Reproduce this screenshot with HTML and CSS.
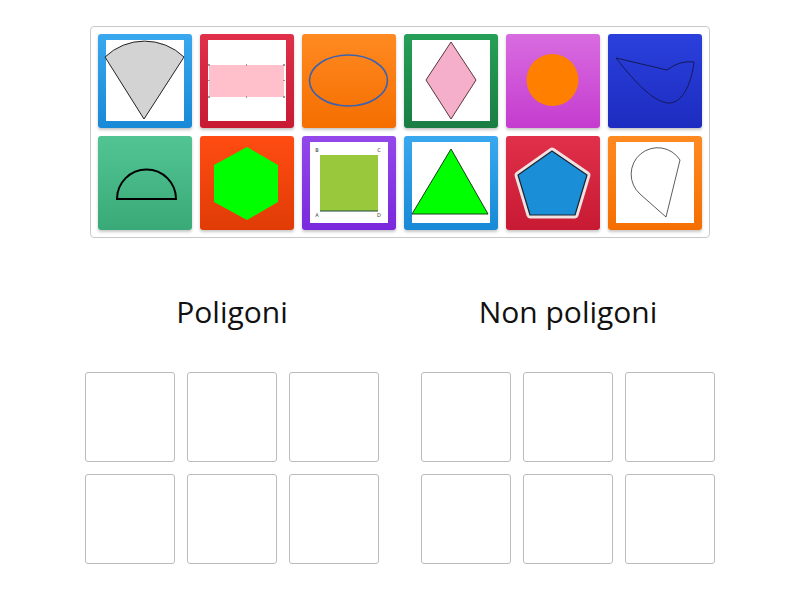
FILE: index.html
```html
<!DOCTYPE html>
<html lang="it">
<head>
    <meta charset="UTF-8">
    <meta name="viewport" content="width=device-width, initial-scale=1.0">
    <title>Poligoni e non poligoni</title>
    <link rel="stylesheet" href="styles.css">
</head>
<body>

    <div class="tray">
        <!-- riga 1 -->
        <div class="tile blue framed">
            <svg viewBox="0 0 94 94"><rect class="paper" x="8" y="6" width="78" height="81"/>
                <path d="M46,85 L7,23 A57,57 0 0 1 86,23 Z" fill="#d3d3d3" stroke="#222" stroke-width="1"/></svg>
        </div>
        <div class="tile red framed">
            <svg viewBox="0 0 94 94"><rect class="paper" x="8" y="6" width="78" height="81"/>
                <rect x="9" y="31" width="75" height="32" fill="#ffc0cb"/>
                <g fill="#999"><rect x="8" y="30" width="2" height="2"/><rect x="83" y="30" width="2" height="2"/><rect x="8" y="62" width="2" height="2"/><rect x="83" y="62" width="2" height="2"/><rect x="46" y="30" width="1" height="2"/><rect x="46" y="62" width="1" height="2"/><rect x="8" y="46" width="2" height="1"/><rect x="83" y="46" width="2" height="1"/></g></svg>
        </div>
        <div class="tile orange">
            <svg viewBox="0 0 94 94"><ellipse cx="46.5" cy="46.5" rx="39" ry="25.5" fill="none" stroke="#3d62ae" stroke-width="1.6"/></svg>
        </div>
        <div class="tile green framed">
            <svg viewBox="0 0 94 94"><rect class="paper" x="8" y="6" width="78" height="81"/>
                <polygon points="47,8 72,46 47,85 22,46" fill="#f5afcb" stroke="#5a3838" stroke-width="1"/></svg>
        </div>
        <div class="tile magenta">
            <svg viewBox="0 0 94 94"><circle cx="46.5" cy="46" r="26" fill="#ff7f00"/></svg>
        </div>
        <div class="tile navy">
            <svg viewBox="0 0 94 94"><path d="M8,24 L59,36 Q72,26 86,28 C84,46 76,70 60,69 C44,68 22,42 8,24 Z" fill="none" stroke="#141a5a" stroke-width="1"/></svg>
        </div>

        <!-- riga 2 -->
        <div class="tile mint">
            <svg viewBox="0 0 94 94"><path d="M19,63 A29.5,29.5 0 0 1 78,63 Z" fill="none" stroke="#000" stroke-width="2"/></svg>
        </div>
        <div class="tile vermilion">
            <svg viewBox="0 0 94 94"><polygon points="47,11 78,29 78,66 47,84 14,66 14,29" fill="#00ff00"/></svg>
        </div>
        <div class="tile purple framed">
            <svg viewBox="0 0 94 94"><rect class="paper" x="8" y="6" width="78" height="81"/>
                <rect x="18" y="19" width="58" height="56" fill="#9ac83c"/>
                <line x1="18" y1="75" x2="76" y2="75" stroke="#1d4a3a" stroke-width="1"/>
                <g class="tag"><text x="15" y="16">B</text><text x="77" y="16">C</text><text x="15" y="81">A</text><text x="77" y="81">D</text></g></svg>
        </div>
        <div class="tile blue framed">
            <svg viewBox="0 0 94 94"><rect class="paper" x="8" y="6" width="78" height="81"/>
                <polygon points="47,13 84,78 8,78" fill="#00ff00" stroke="#124012" stroke-width="1"/></svg>
        </div>
        <div class="tile red">
            <svg viewBox="0 0 94 94"><polygon points="46,15 81,39 69,79 24,79 12,39" fill="none" stroke="#efe2e2" stroke-width="7" stroke-linejoin="round"/>
                <polygon points="46,15 81,39 69,79 24,79 12,39" fill="#1a8fd8" stroke="#1c2430" stroke-width="1.2" stroke-linejoin="round"/></svg>
        </div>
        <div class="tile orange framed">
            <svg viewBox="0 0 94 94"><rect class="paper" x="8" y="6" width="78" height="81"/>
                <path d="M32,58 A26.5,26.5 0 1 1 72,24 L58,81 Z" fill="none" stroke="#333" stroke-width="0.8"/></svg>
        </div>
    </div>

    <div class="sorter">
        <div class="group">
            <h2>Poligoni</h2>
            <div class="slots">
                <div class="slot"></div><div class="slot"></div><div class="slot"></div>
                <div class="slot"></div><div class="slot"></div><div class="slot"></div>
            </div>
        </div>
        <div class="group">
            <h2>Non poligoni</h2>
            <div class="slots">
                <div class="slot"></div><div class="slot"></div><div class="slot"></div>
                <div class="slot"></div><div class="slot"></div><div class="slot"></div>
            </div>
        </div>
    </div>

</body>
</html>
```

FILE: styles.css
```css
body {
    margin: 0;
    font-family: 'Open Sans', 'Noto Sans', sans-serif;
    background: #fff;
    color: #111;
}
.tray {
    width: 604px;
    margin: 26px auto 0;
    padding: 7px;
    border: 1px solid #c8c8c8;
    border-radius: 4px;
    display: grid;
    grid-template-columns: repeat(6, 94px);
    gap: 8px;
}
.tile {
    width: 94px;
    height: 94px;
    border-radius: 3px;
    box-shadow: 0 2px 3px rgba(0, 0, 0, 0.22);
}
.tile svg {
    display: block;
    width: 94px;
    height: 94px;
}
.paper {
    fill: #fff;
}
.tag text {
    font-family: 'DejaVu Sans', sans-serif;
    font-size: 5px;
    fill: #333;
    text-anchor: middle;
}

/* colori delle tessere */
.blue { background: linear-gradient(#3aa8ef, #1889d6); }
.red { background: linear-gradient(#e0304a, #c81a32); }
.orange { background: linear-gradient(#ff8a22, #f56e00); }
.green { background: linear-gradient(#25a057, #1a7d44); }
.magenta { background: linear-gradient(#d86ce0, #c53ccf); }
.navy { background: linear-gradient(#2a40dc, #1d2cc0); }
.mint { background: linear-gradient(#52c493, #3aa978); }
.vermilion { background: linear-gradient(#ff4c12, #e03c06); }
.purple { background: linear-gradient(#9448ea, #7a28dc); }

.sorter {
    display: flex;
    justify-content: center;
    gap: 42px;
    margin-top: 53px;
}
.group {
    display: flex;
    flex-direction: column;
    align-items: center;
}
.group h2 {
    margin: 0 0 40px;
    font-size: 30px;
    font-weight: 400;
    line-height: 41px;
}
.slots {
    display: grid;
    grid-template-columns: repeat(3, 90px);
    grid-auto-rows: 90px;
    gap: 12px;
}
.slot {
    border: 1px solid #bcbcbc;
    border-radius: 3px;
}
```
